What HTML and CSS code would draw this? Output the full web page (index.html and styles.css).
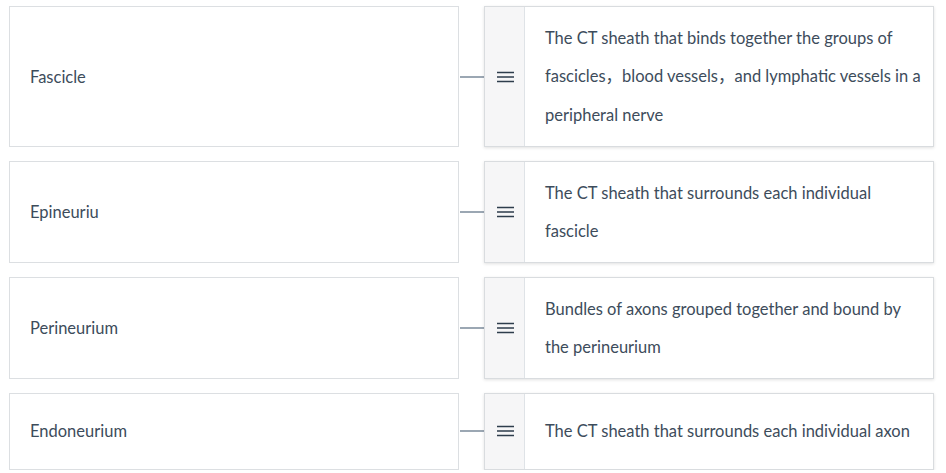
FILE: index.html
```html
<!DOCTYPE html>
<html>
<head>
<meta charset="utf-8">
<link rel="stylesheet" href="styles.css">
</head>
<body>
<div class="list">
  <div class="row">
    <div class="term">Fascicle</div>
    <div class="link"></div>
    <div class="card">
      <div class="handle"><svg width="17" height="12" viewBox="0 0 17 12"><path d="M0 1.5H17M0 6H17M0 10.5H17" stroke="#2e3d4c" stroke-width="1.6"/></svg></div>
      <div class="def"><p class="text">The CT sheath that binds together the groups of fascicles，blood vessels，and lymphatic vessels in a peripheral nerve</p></div>
    </div>
  </div>
  <div class="row">
    <div class="term">Epineuriu</div>
    <div class="link"></div>
    <div class="card">
      <div class="handle"><svg width="17" height="12" viewBox="0 0 17 12"><path d="M0 1.5H17M0 6H17M0 10.5H17" stroke="#2e3d4c" stroke-width="1.6"/></svg></div>
      <div class="def"><p class="text">The CT sheath that surrounds each individual fascicle</p></div>
    </div>
  </div>
  <div class="row">
    <div class="term">Perineurium</div>
    <div class="link"></div>
    <div class="card">
      <div class="handle"><svg width="17" height="12" viewBox="0 0 17 12"><path d="M0 1.5H17M0 6H17M0 10.5H17" stroke="#2e3d4c" stroke-width="1.6"/></svg></div>
      <div class="def"><p class="text">Bundles of axons grouped together and bound by the perineurium</p></div>
    </div>
  </div>
  <div class="row">
    <div class="term">Endoneurium</div>
    <div class="link"></div>
    <div class="card">
      <div class="handle"><svg width="17" height="12" viewBox="0 0 17 12"><path d="M0 1.5H17M0 6H17M0 10.5H17" stroke="#2e3d4c" stroke-width="1.6"/></svg></div>
      <div class="def"><p class="text">The CT sheath that surrounds each individual axon</p></div>
    </div>
  </div>
</div>
</body>
</html>
```

FILE: styles.css
```css
* { box-sizing: border-box; }
html, body { margin: 0; background: #fff; }
body {
  font-family: Lato, "Noto Sans CJK SC", sans-serif;
  font-size: 16.5px;
  color: #3d4c5b;
}
.list {
  padding: 6px 0 0 9px;
  display: flex;
  flex-direction: column;
  gap: 13.3px;
}
.row {
  display: grid;
  grid-template-columns: 450px 25px 450px;
  align-items: stretch;
}
.term {
  border: 1px solid #dcdfe2;
  display: flex;
  align-items: center;
  padding: 0 20px;
  min-height: 77px;
}
.link {
  align-self: center;
  height: 2px;
  background: #9ba7b3;
  margin-left: 1px;
}
.card {
  display: flex;
  border: 1px solid #d9dcdf;
  box-shadow: 0 1px 3px rgba(0,0,0,0.12);
  min-height: 77px;
  background: #fff;
}
.handle {
  width: 40px;
  flex: none;
  background: #f6f6f7;
  border-right: 1px solid #dfe3e7;
  display: flex;
  align-items: center;
  justify-content: center;
}
.handle svg { display: block; margin-left: 1px; }
.def {
  flex: 1;
  padding: 12px 12px 12px 20px;
  display: flex;
  align-items: center;
}
.text {
  margin: 0;
  line-height: 38.4px;
}
```
